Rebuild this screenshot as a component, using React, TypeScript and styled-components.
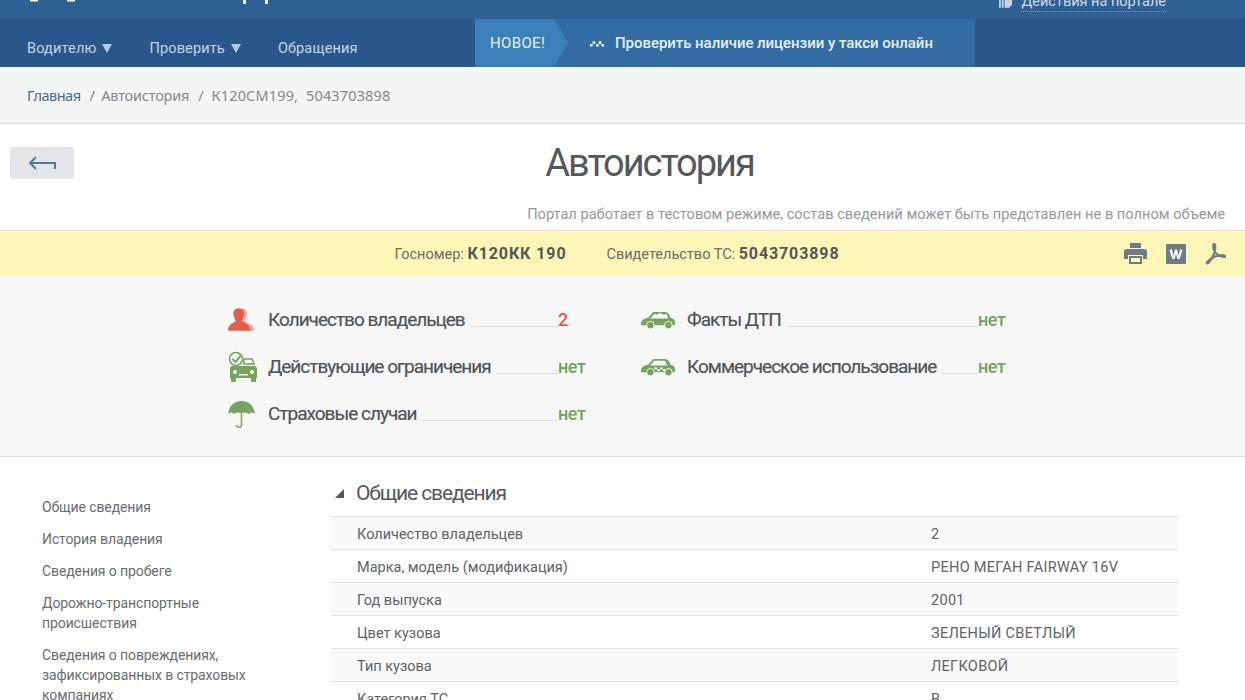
import React from "react";
import styled, { createGlobalStyle } from "styled-components";

const Global = createGlobalStyle`
  html, body { margin: 0; padding: 0; background: #fff; overflow: hidden; }
  body { font-family: "Roboto", "Liberation Sans", sans-serif; width: 1245px; height: 700px; }
  * { box-sizing: border-box; }
`;

const Page = styled.div`
  width: 1245px;
  height: 700px;
  overflow: hidden;
  display: flex;
  flex-direction: column;
`;

const TopBand = styled.div`
  height: 19px;
  flex: none;
  background: #2f6094;
  display: flex;
  justify-content: space-between;
  align-items: flex-start;
  padding: 0 79px 0 28px;
  overflow: hidden;
`;

const LogoStubs = styled.svg`
  width: 280px;
  height: 19px;
`;

const ActionsLink = styled.a`
  display: flex;
  align-items: center;
  gap: 8px;
  color: #cfdcea;
  font-size: 14.5px;
  line-height: 18px;
  margin-top: -7px;
`;

const ActionsText = styled.span`
  border-bottom: 1px dotted #7f9dbd;
`;

const NavBar = styled.nav`
  height: 48px;
  flex: none;
  background: #29578c;
  display: flex;
  padding-left: 27px;
`;

const NavMenu = styled.div`
  width: 448px;
  display: flex;
  align-items: center;
  gap: 37px;
  padding-top: 10px;
`;

const NavItem = styled.span`
  color: #c3d5e8;
  font-size: 14.5px;
  letter-spacing: 0.15px;
  display: flex;
  align-items: center;
  gap: 6px;
`;

const Caret = styled.span`
  width: 0;
  height: 0;
  border-left: 5.5px solid transparent;
  border-right: 5.5px solid transparent;
  border-top: 9px solid #b5cbe2;
`;

const Promo = styled.div`
  width: 500px;
  background: #336ca3;
  display: flex;
  align-items: center;
`;

const PromoTag = styled.div`
  width: 93px;
  height: 100%;
  background: #3b80ba;
  color: #e4f2f6;
  font-size: 15px;
  display: flex;
  align-items: center;
  padding: 0 0 0 15px;
  clip-path: polygon(0 0, 79px 0, 93px 50%, 79px 100%, 0 100%);
  flex: none;
  letter-spacing: 0.35px;
`;

const PromoText = styled.div`
  display: flex;
  align-items: center;
  gap: 11px;
  margin-left: 22px;
  color: #e6f0f6;
  font-size: 15px;
  font-weight: 500;
  letter-spacing: -0.05px;
`;

const Crumbs = styled.div`
  height: 57px;
  flex: none;
  background: #f4f5f5;
  border-bottom: 1px solid #d8d8d8;
  display: flex;
  align-items: center;
  padding: 0 0 1px 27px;
  color: #85888c;
  font-size: 14.5px;
  font-family: "Noto Sans", sans-serif;
`;

const CrumbHome = styled.span`
  color: #4a6b8e;
  margin-right: 9px;
  letter-spacing: -0.5px;
`;

const CrumbPart = styled.span<{ $spacing: number; $words: number }>`
  margin-right: 9px;
  letter-spacing: ${(p) => p.$spacing}px;
  word-spacing: ${(p) => p.$words}px;
`;

const TitleArea = styled.div`
  height: 107px;
  flex: none;
  padding: 16px 20px 0 10px;
  display: flex;
  flex-direction: column;
  border-bottom: 1px solid #e4e2cc;
  position: relative;
`;

const BackButton = styled.button`
  position: absolute;
  left: 10px;
  top: 23px;
  width: 64px;
  height: 32px;
  border: none;
  border-radius: 3px;
  background: #e4e5e8;
  display: flex;
  align-items: center;
  justify-content: center;
  padding: 0;
`;

const Title = styled.h1`
  margin: 0;
  padding-left: 64px;
  font-size: 38px;
  line-height: 46px;
  font-weight: 400;
  color: #55585a;
  text-align: center;
  letter-spacing: -2px;
`;

const Notice = styled.div`
  margin-top: 20px;
  text-align: right;
  font-size: 14.62px;
  line-height: 17px;
  color: #95989b;
`;

const PlateBar = styled.div`
  height: 45px;
  flex: none;
  background: #fef6b7;
  display: grid;
  grid-template-columns: 1fr auto 1fr;
  align-items: center;
  padding: 0 19px 0 0;
`;

const PlateInfo = styled.div`
  grid-column: 2;
  display: flex;
  gap: 40px;
  font-size: 14.5px;
  color: #6a6d70;
  align-items: baseline;
  transform: translateX(4px);
`;

const PlateValue = styled.b`
  font-size: 16px;
  font-weight: 700;
  color: #54575a;
  letter-spacing: 0.9px;
`;

const ExportIcons = styled.div`
  grid-column: 3;
  justify-self: end;
  display: flex;
  align-items: center;
  gap: 19px;
`;

const Summary = styled.section`
  height: 181px;
  flex: none;
  background: #f7f7f7;
  border-bottom: 1px solid #dfdfdf;
  padding: 20px 0 0 228px;
  display: grid;
  grid-template-columns: 357px 365px;
  column-gap: 55px;
  align-content: start;
  grid-auto-flow: column;
  grid-template-rows: repeat(3, 47px);
`;

const SummaryRow = styled.div`
  display: flex;
  align-items: center;
  height: 47px;
`;

const IconSlot = styled.span<{ $wide?: boolean }>`
  width: ${(p) => (p.$wide ? 47 : 40)}px;
  height: 32px;
  display: flex;
  align-items: center;
  flex: none;
`;

const SummaryLabel = styled.span`
  font-size: 19px;
  font-weight: 400;
  color: #515458;
  letter-spacing: -1px;
  white-space: nowrap;
  -webkit-text-stroke: 0.2px #515458;
`;

const Leader = styled.span`
  flex: 1;
  height: 1px;
  background: #dcdcdc;
  margin: 13px 0 0 5px;
`;

const SummaryValue = styled.span<{ $alert?: boolean }>`
  width: 27px;
  flex: none;
  font-size: 18px;
  font-weight: 500;
  color: ${(p) => (p.$alert ? "#dc5a4a" : "#73a35f")};
  letter-spacing: -0.4px;
`;

const Body = styled.main`
  flex: 1;
  display: grid;
  grid-template-columns: 331px 847px;
  min-height: 0;
`;

const SideNav = styled.aside`
  padding: 40px 0 0 42px;
  display: flex;
  flex-direction: column;
  gap: 12px;
`;

const SideLink = styled.div`
  width: 215px;
  font-size: 14px;
  line-height: 20px;
  color: #696c70;
  letter-spacing: -0.1px;
`;

const SectionHead = styled.div`
  height: 59px;
  display: flex;
  align-items: center;
  padding: 13px 0 0 4px;
  gap: 12px;
`;

const SectionArrow = styled.span`
  width: 0;
  height: 0;
  border-bottom: 9px solid #55585c;
  border-left: 9px solid transparent;
`;

const SectionTitle = styled.h2`
  margin: 0;
  font-size: 21px;
  font-weight: 400;
  color: #55585c;
  letter-spacing: -1.1px;
`;

const Row = styled.div`
  height: 33px;
  border-top: 1px solid #e2e2e2;
  display: grid;
  grid-template-columns: 574px 1fr;
  align-items: center;
  padding: 2px 0 0 26px;
  font-size: 14.5px;
  color: #606367;
  background: #fff;
  &:nth-child(odd) { background: #fafafa; }
`;

const RowValue = styled.span`
  letter-spacing: 0.3px;
`;

const WheelCar = ({ children }: { children?: React.ReactNode }) => (
  <svg width="36" height="21" viewBox="0 0 38 22">
    <path d="M1 16c0-4 3-6 8-7l5-6h12c3 0 5 2 6 6 3 1 5 2 5 5v3H1z" fill="#74a45f" />
    <circle cx="11" cy="17" r="4" fill="#74a45f" stroke="#f7f7f7" strokeWidth="1" />
    <circle cx="30" cy="17" r="4" fill="#74a45f" stroke="#f7f7f7" strokeWidth="1" />
    {children}
  </svg>
);

const rows = [
  ["Количество владельцев", "2"],
  ["Марка, модель (модификация)", "РЕНО МЕГАН FAIRWAY 16V"],
  ["Год выпуска", "2001"],
  ["Цвет кузова", "ЗЕЛЕНЫЙ СВЕТЛЫЙ"],
  ["Тип кузова", "ЛЕГКОВОЙ"],
  ["Категория ТС", "В"],
];

const side = [
  "Общие сведения",
  "История владения",
  "Сведения о пробеге",
  "Дорожно-транспортные происшествия",
  "Сведения о повреждениях, зафиксированных в страховых компаниях",
];

export default function App() {
  return (
    <Page>
      <Global />
      <TopBand>
        <LogoStubs viewBox="0 0 280 19">
          <rect x="2" y="0" width="8" height="1.5" fill="#fff" />
          <rect x="39" y="0" width="8" height="1.5" fill="#fff" />
          <rect x="215" y="0" width="3" height="4" fill="#e8f2fa" />
          <rect x="237" y="0" width="3" height="4" fill="#e8f2fa" />
        </LogoStubs>
        <ActionsLink>
          <svg width="14" height="12" viewBox="0 0 15 12">
            <path d="M0 0h2v11H0zM3 0h2v11H3zM6 1h8v7l-3 3H6z" fill="#c5d4e4" />
          </svg>
          <ActionsText>Действия на портале</ActionsText>
        </ActionsLink>
      </TopBand>
      <NavBar>
        <NavMenu>
          <NavItem>Водителю <Caret /></NavItem>
          <NavItem>Проверить <Caret /></NavItem>
          <NavItem>Обращения</NavItem>
        </NavMenu>
        <Promo>
          <PromoTag>НОВОЕ!</PromoTag>
          <PromoText>
            <svg width="14" height="7" viewBox="0 0 16 7">
              <path d="M0 4h3v3H0zM3 1h3v3H3zM7 4h3v3H7zM10 1h3v3h-3zM13 4h3v3h-3z" fill="#e6f0f6" />
            </svg>
            Проверить наличие лицензии у такси онлайн
          </PromoText>
        </Promo>
      </NavBar>
      <Crumbs>
        <CrumbHome>Главная</CrumbHome>
        <CrumbPart $spacing={-0.2} $words={3}>/ Автоистория</CrumbPart>
        <CrumbPart $spacing={0.14} $words={4}>/ К120СМ199, 5043703898</CrumbPart>
      </Crumbs>
      <TitleArea>
        <BackButton aria-label="Назад">
          <svg width="28" height="14" viewBox="0 0 28 14" fill="none" stroke="#54789c" strokeWidth="2">
            <path d="M8 1L2 7l6 6M2 7h25v6" />
          </svg>
        </BackButton>
        <Title>Автоистория</Title>
        <Notice>Портал работает в тестовом режиме, состав сведений может быть представлен не в полном объеме</Notice>
      </TitleArea>
      <PlateBar>
        <PlateInfo>
          <span>Госномер: <PlateValue>К120КК 190</PlateValue></span>
          <span>Свидетельство ТС: <PlateValue>5043703898</PlateValue></span>
        </PlateInfo>
        <ExportIcons>
          <svg width="23" height="21" viewBox="0 0 23 21">
            <path d="M6 0h11v5H6zM3 6h17c2 0 3 1 3 3v7h-4v-4H4v4H0V9c0-2 1-3 3-3zM5 13h13v8H5z" fill="#6e7c85" />
            <rect x="7" y="15" width="9" height="4" fill="#fef6b7" />
          </svg>
          <svg width="20" height="20" viewBox="0 0 20 20">
            <rect width="20" height="20" rx="1" fill="#6e7c85" />
            <path d="M3.500 5.500h2.400l1.600 6.500 1.500-6.500h2l1.500 6.500 1.600-6.500h2.400l-2.800 9.500H11.400L10 9.600 8.600 15H6.300z" fill="#fff" />
          </svg>
          <svg width="21" height="22" viewBox="0 0 21 22" fill="none" stroke="#6e7c85" strokeWidth="2.200" strokeLinecap="round">
            <path d="M9 1c-1 0-1 3 0 6 1 3 4 6 10 7 2 0 1-2-1-2-4 0-11 2-16 7-1 2 1 2 3-1 4-5 6-12 5-16-.300-1-1-1-1-1z" />
          </svg>
        </ExportIcons>
      </PlateBar>
      <Summary>
        <SummaryRow>
          <IconSlot>
            <svg width="28" height="23" viewBox="0 0 30 24">
              <path d="M14 0c5 0 7 4 6 8-1 3-2 4-2 6 2 2 10 3 10 10H14z" fill="#eda596" />
              <path d="M11 0c5 0 7 4 6 8-1 3-2 4-2 6 2 2 9 3 9 10H0c0-7 6-8 8-10 0-2-1-3-2-6-1-4 1-8 5-8z" fill="#e0604c" />
            </svg>
          </IconSlot>
          <SummaryLabel>Количество владельцев</SummaryLabel>
          <Leader />
          <SummaryValue $alert>2</SummaryValue>
        </SummaryRow>
        <SummaryRow>
          <IconSlot>
            <svg width="30" height="32" viewBox="0 0 30 32">
              <circle cx="8" cy="8" r="6.500" fill="none" stroke="#74a45f" strokeWidth="1.600" />
              <path d="M4.500 8l3 3 5-6" fill="none" stroke="#74a45f" strokeWidth="2" />
              <path d="M16 8h8l2 5h-10z" fill="none" stroke="#74a45f" strokeWidth="1.500" />
              <path d="M2 18c0-2 1-3 3-3h21c2 0 3 1 3 3v9H2z" fill="#74a45f" />
              <rect x="3" y="26" width="5" height="5" rx="1" fill="#74a45f" />
              <rect x="23" y="26" width="5" height="5" rx="1" fill="#74a45f" />
              <circle cx="7" cy="21" r="2" fill="#f7f7f7" />
              <circle cx="24" cy="21" r="2" fill="#f7f7f7" />
              <rect x="11" y="23" width="9" height="1.500" fill="#f7f7f7" />
            </svg>
          </IconSlot>
          <SummaryLabel>Действующие ограничения</SummaryLabel>
          <Leader />
          <SummaryValue>нет</SummaryValue>
        </SummaryRow>
        <SummaryRow>
          <IconSlot>
            <svg width="27" height="28" viewBox="0 0 27 28">
              <path d="M13.500 1C6 1 1 6 0 14c2-2 4-2 6.500 0 2-2 5-2 7 0 2-2 5-2 7 0 2.500-2 4.500-2 6.500 0C26 6 21 1 13.500 1z" fill="#74a45f" />
              <path d="M13.500 14v11c0 3-5 3-5 0" fill="none" stroke="#74a45f" strokeWidth="1.500" />
            </svg>
          </IconSlot>
          <SummaryLabel>Страховые случаи</SummaryLabel>
          <Leader />
          <SummaryValue>нет</SummaryValue>
        </SummaryRow>
        <SummaryRow>
          <IconSlot $wide>
            <WheelCar>
              <path d="M15 5l3 1 3-2 4 2 3-1 2 5H11z" fill="#f7f7f7" />
            </WheelCar>
          </IconSlot>
          <SummaryLabel>Факты ДТП</SummaryLabel>
          <Leader />
          <SummaryValue>нет</SummaryValue>
        </SummaryRow>
        <SummaryRow>
          <IconSlot $wide>
            <WheelCar>
              <path d="M15 5h11l3 5H11z" fill="#f7f7f7" />
              <path d="M15 12h3v2h-3zM21 12h3v2h-3zM18 14h3v2h-3zM24 14h3v2h-3z" fill="#f7f7f7" />
            </WheelCar>
          </IconSlot>
          <SummaryLabel>Коммерческое использование</SummaryLabel>
          <Leader />
          <SummaryValue>нет</SummaryValue>
        </SummaryRow>
      </Summary>
      <Body>
        <SideNav>
          {side.map((s) => (
            <SideLink key={s}>{s}</SideLink>
          ))}
        </SideNav>
        <section>
          <SectionHead>
            <SectionArrow />
            <SectionTitle>Общие сведения</SectionTitle>
          </SectionHead>
          <div>
            {rows.map(([k, v]) => (
              <Row key={k}>
                <span>{k}</span>
                <RowValue>{v}</RowValue>
              </Row>
            ))}
          </div>
        </section>
      </Body>
    </Page>
  );
}
